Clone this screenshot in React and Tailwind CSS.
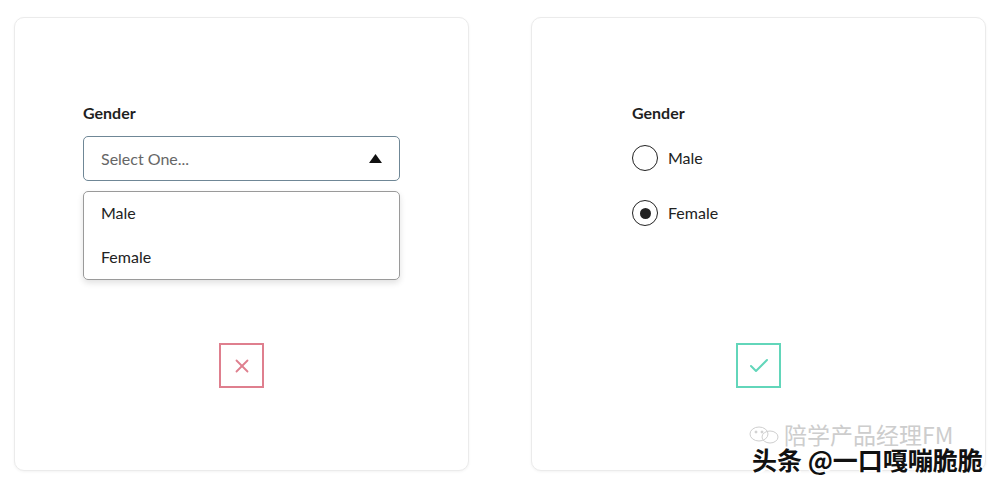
import { Check, X } from "lucide-react";

const font = { fontFamily: "Lato, 'Noto Sans', sans-serif" };

function Card({ children, mark }) {
  return (
    <div className="w-[455px] h-[454px] rounded-[10px] border border-[#ebebeb] bg-white shadow-[0_1px_3px_rgba(0,0,0,0.05)] flex flex-col">
      {children}
      <div className="mt-auto mb-[82px] self-center">{mark}</div>
    </div>
  );
}

function Radio({ label, checked }) {
  return (
    <div className="flex items-center gap-[10px] h-[26px]">
      <span className="w-[26px] h-[26px] rounded-full border-[1.5px] border-[#222] flex items-center justify-center">
        {checked && <span className="w-[11px] h-[11px] rounded-full bg-[#222]" />}
      </span>
      <span className="text-[16px] text-[#222]">{label}</span>
    </div>
  );
}

export default function App() {
  return (
    <div className="relative w-[1000px] h-[489px] bg-white overflow-hidden" style={font}>
      <div className="flex gap-[62px] pl-[14px] pt-[17px]">
        <Card
          mark={
            <div className="w-[45px] h-[45px] border-[2.5px] border-[#df7f8e] flex items-center justify-center">
              <X size={22} strokeWidth={2} color="#df7f8e" />
            </div>
          }
        >
          <div className="pl-[68px] pt-[85px]">
            <div className="text-[16px] font-bold text-[#1f1f1f] leading-5">Gender</div>
            <div className="mt-[13px] w-[317px] h-[45px] rounded-[5px] border border-[#6f8796] flex items-center justify-between pl-[17px] pr-[17px]">
              <span className="text-[16px] text-[#666]">Select One...</span>
              <svg width="13" height="9" viewBox="0 0 13 9">
                <path d="M6.5 0 L13 9 L0 9 Z" fill="#111" />
              </svg>
            </div>
            <div className="mt-[10px] w-[317px] h-[89px] rounded-[5px] border border-[#9a9a9a] shadow-[0_3px_6px_rgba(0,0,0,0.12)] pl-[17px] flex flex-col">
              <div className="h-[43px] flex items-center text-[16px] text-[#222]">Male</div>
              <div className="h-[46px] flex items-center text-[16px] text-[#222]">Female</div>
            </div>
          </div>
        </Card>
        <Card
          mark={
            <div className="w-[45px] h-[45px] border-[2.5px] border-[#62d6ba] flex items-center justify-center">
              <Check size={24} strokeWidth={2} color="#62d6ba" />
            </div>
          }
        >
          <div className="pl-[100px] pt-[85px]">
            <div className="text-[16px] font-bold text-[#1f1f1f] leading-5">Gender</div>
            <div className="mt-[22px] flex flex-col gap-[29px]">
              <Radio label="Male" />
              <Radio label="Female" checked />
            </div>
          </div>
        </Card>
      </div>

      <div className="absolute left-[748px] top-[423px] flex items-center gap-[4px] text-[#cdcdcd]">
        <svg width="32" height="20" viewBox="0 0 32 20" fill="none" stroke="#cfcfcf" strokeWidth="1">
          <ellipse cx="11" cy="9" rx="9" ry="7" />
          <ellipse cx="22" cy="12" rx="8" ry="6" />
          <circle cx="8" cy="7" r="1" fill="#cfcfcf" />
          <circle cx="14" cy="7" r="1" fill="#cfcfcf" />
        </svg>
        <span className="text-[23px] leading-none" style={{ fontFamily: "'Noto Sans CJK SC', sans-serif" }}>
          陪学产品经理FM
        </span>
      </div>
      <div
        className="absolute left-[752px] top-[447px] text-[25px] leading-none text-[#111] font-bold"
        style={{
          fontFamily: "'Noto Sans CJK SC', sans-serif",
          textShadow: "2px 2px 0 #fff, -1px -1px 0 #fff, 1px -1px 0 #fff, -1px 1px 0 #fff",
        }}
      >
        头条 @一口嘎嘣脆脆
      </div>
    </div>
  );
}
